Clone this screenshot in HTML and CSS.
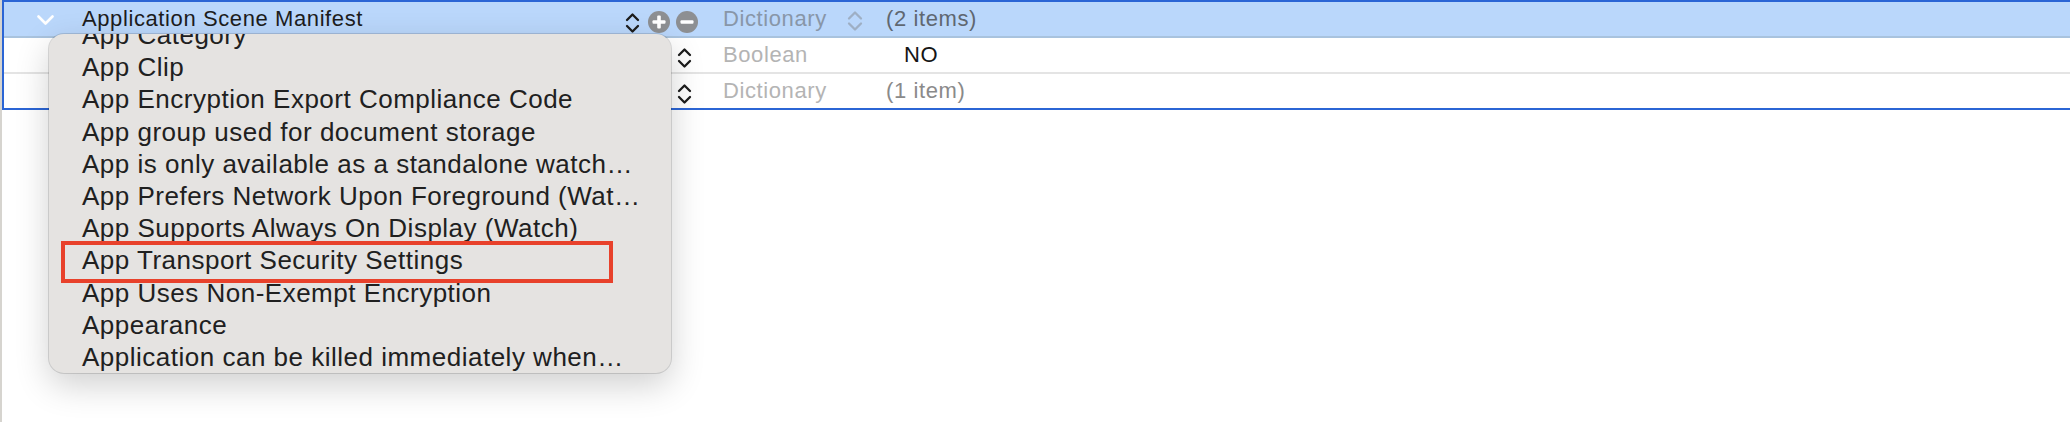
FILE: index.html
```html
<!DOCTYPE html>
<html lang="en">
<head>
<meta charset="utf-8">
<title>Info.plist</title>
<link rel="stylesheet" href="styles.css">
</head>
<body>
<div class="page">
  <div class="table">
    <div class="row row-selected">
      <div class="key">
        <span class="disclosure">
          <svg width="17" height="10" viewBox="0 0 17 10"><polyline points="1.5,1.5 8.5,8.5 15.5,1.5" fill="none" stroke="#ffffff" stroke-width="2.6" stroke-linecap="round" stroke-linejoin="round"/></svg>
        </span>
        <span class="name">Application Scene Manifest</span>
        <span class="controls">
          <svg class="stepper" width="15" height="22" viewBox="0 0 15 22"><polyline points="2,8 7.5,2.5 13,8" fill="none" stroke="#1c1c1c" stroke-width="2.3" stroke-linecap="round" stroke-linejoin="round"/><polyline points="2,14 7.5,19.5 13,14" fill="none" stroke="#1c1c1c" stroke-width="2.3" stroke-linecap="round" stroke-linejoin="round"/></svg>
          <svg class="circle-btn plus" width="22" height="22" viewBox="0 0 22 22"><circle cx="11" cy="11" r="11" fill="#8d8f92"/><rect x="4.5" y="9.2" width="13" height="3.6" rx="1" fill="#ffffff"/><rect x="9.2" y="4.5" width="3.6" height="13" rx="1" fill="#ffffff"/></svg>
          <svg class="circle-btn" width="22" height="22" viewBox="0 0 22 22"><circle cx="11" cy="11" r="11" fill="#8d8f92"/><rect x="4.5" y="9.2" width="13" height="3.6" rx="1" fill="#ffffff"/></svg>
        </span>
      </div>
      <div class="type type-selected">
        <span>Dictionary</span>
        <svg class="type-stepper" width="16" height="22" viewBox="0 0 16 22"><polyline points="2,8.5 8,2.5 14,8.5" fill="none" stroke="#9eafc4" stroke-width="2.3" stroke-linecap="round" stroke-linejoin="round"/><polyline points="2,13.5 8,19.5 14,13.5" fill="none" stroke="#9eafc4" stroke-width="2.3" stroke-linecap="round" stroke-linejoin="round"/></svg>
      </div>
      <div class="value value-count-selected">(2 items)</div>
    </div>
    <div class="row row-plain">
      <div class="key">
        <span class="controls">
          <svg class="stepper stepper-solo" width="15" height="22" viewBox="0 0 15 22"><polyline points="2,8 7.5,2.5 13,8" fill="none" stroke="#1c1c1c" stroke-width="2.3" stroke-linecap="round" stroke-linejoin="round"/><polyline points="2,14 7.5,19.5 13,14" fill="none" stroke="#1c1c1c" stroke-width="2.3" stroke-linecap="round" stroke-linejoin="round"/></svg>
        </span>
      </div>
      <div class="type type-muted">Boolean</div>
      <div class="value value-bool">NO</div>
    </div>
    <div class="row row-last">
      <div class="key">
        <span class="controls">
          <svg class="stepper stepper-solo" width="15" height="22" viewBox="0 0 15 22"><polyline points="2,8 7.5,2.5 13,8" fill="none" stroke="#1c1c1c" stroke-width="2.3" stroke-linecap="round" stroke-linejoin="round"/><polyline points="2,14 7.5,19.5 13,14" fill="none" stroke="#1c1c1c" stroke-width="2.3" stroke-linecap="round" stroke-linejoin="round"/></svg>
        </span>
      </div>
      <div class="type type-muted">Dictionary</div>
      <div class="value value-count">(1 item)</div>
    </div>
  </div>

  <div class="menu">
    <ul class="menu-list">
      <li class="menu-item">App Category</li>
      <li class="menu-item">App Clip</li>
      <li class="menu-item">App Encryption Export Compliance Code</li>
      <li class="menu-item">App group used for document storage</li>
      <li class="menu-item">App is only available as a standalone watch…</li>
      <li class="menu-item">App Prefers Network Upon Foreground (Wat…</li>
      <li class="menu-item">App Supports Always On Display (Watch)</li>
      <li class="menu-item">App Transport Security Settings</li>
      <li class="menu-item">App Uses Non-Exempt Encryption</li>
      <li class="menu-item">Appearance</li>
      <li class="menu-item">Application can be killed immediately when…</li>
    </ul>
  </div>

  <div class="annotation"></div>
</div>
</body>
</html>
```

FILE: styles.css
```css
* {
  box-sizing: border-box;
}

html, body {
  margin: 0;
  padding: 0;
  background: #ffffff;
}

body {
  font-family: "Liberation Sans", Arial, Helvetica, sans-serif;
}

.page {
  position: relative;
  width: 2070px;
  height: 422px;
  overflow: hidden;
  border-left: 2px solid #d6d4cf;
  background: #ffffff;
}

.table {
  border-top: 2px solid #2b65d5;
  border-bottom: 2px solid #2b65d5;
  border-left: 2px solid #2b65d5;
}

.row {
  display: grid;
  grid-template-columns: 698px 184px 1fr;
  height: 36px;
  border-bottom: 2px solid #e4e4e4;
  font-size: 22px;
  letter-spacing: 0.6px;
}

.row-selected {
  background: #bad7fb;
  border-bottom-color: #a9c3de;
}

.row-last {
  height: 34px;
  border-bottom: none;
}

.key {
  display: flex;
  align-items: center;
  padding-left: 33px;
  padding-right: 4px;
  min-width: 0;
}

.disclosure {
  display: flex;
  width: 17px;
  height: 10px;
  margin-right: 28px;
  margin-top: 1px;
}

.name {
  flex: 1;
  white-space: nowrap;
  color: #1d1d1d;
}

.controls {
  display: flex;
  align-items: center;
  margin-left: auto;
  margin-top: 5px;
}

.stepper {
  display: block;
  margin-right: 8px;
  margin-top: 2px;
}

.stepper-solo {
  margin-right: 6px;
  margin-top: 1px;
}

.circle-btn {
  display: block;
}

.plus {
  margin-right: 6px;
}

.type {
  display: flex;
  align-items: center;
  justify-content: space-between;
  padding-left: 21px;
  padding-right: 23px;
  white-space: nowrap;
}

.type-selected {
  color: #8896a8;
}

.type-stepper {
  display: block;
  margin-top: 4px;
}

.type-muted {
  color: #b4b4b4;
}

.value {
  display: flex;
  align-items: center;
  white-space: nowrap;
}

.value-count-selected {
  color: #5f6771;
}

.value-count {
  color: #8a8a8a;
}

.value-bool {
  padding-left: 18px;
  color: #151515;
}

.menu {
  position: absolute;
  left: 47px;
  top: 34px;
  width: 622px;
  height: 339px;
  border-radius: 15px;
  background: #e5e3e1;
  overflow: hidden;
  box-shadow: 0 0 0 1px rgba(0, 0, 0, 0.13), 0 12px 34px rgba(0, 0, 0, 0.19);
}

.menu-list {
  list-style: none;
  margin: -15px 0 0 0;
  padding: 0 0 0 33px;
}

.menu-item {
  height: 32.2px;
  line-height: 32.2px;
  font-size: 26px;
  letter-spacing: 0.5px;
  color: #202020;
  white-space: nowrap;
}

.annotation {
  position: absolute;
  left: 59px;
  top: 241px;
  width: 552px;
  height: 42px;
  border: 4px solid #e8412b;
}
```
